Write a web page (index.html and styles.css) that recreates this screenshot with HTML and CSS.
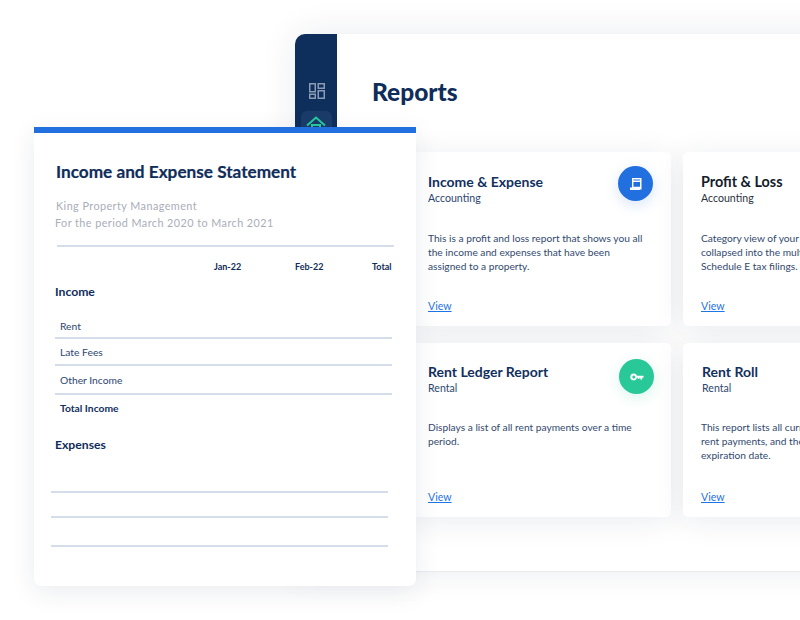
FILE: index.html
```html
<!DOCTYPE html>
<html lang="en">
<head>
<meta charset="utf-8">
<title>Reports</title>
<link rel="stylesheet" href="styles.css">
</head>
<body>
<div class="stage">
  <section class="app">
    <nav class="rail">
      <svg class="rail-icon" viewBox="0 0 16 16" width="16" height="16" fill="none" stroke="#8a9bb3" stroke-width="1.5">
        <rect x="0.75" y="0.75" width="5.5" height="8"/>
        <rect x="9.25" y="0.75" width="6" height="4.5"/>
        <rect x="0.75" y="11.25" width="5.5" height="4"/>
        <rect x="9.25" y="7.75" width="6" height="7.5"/>
      </svg>
      <div class="rail-active">
        <svg viewBox="0 0 20 16" width="20" height="16" fill="none" stroke="#25c9a0" stroke-width="2">
          <path d="M1 9.5 L10 1.5 L19 9.5"/>
          <path d="M6 9 H14 V16 H6 Z"/>
        </svg>
      </div>
    </nav>
    <main class="main">
      <h1 class="page-title">Reports</h1>
      <div class="cards">
        <article class="card">
          <div class="card-head">
            <div>
              <h2 class="card-title">Income &amp; Expense</h2>
              <p class="card-sub">Accounting</p>
            </div>
            <span class="badge badge-blue">
              <svg viewBox="0 0 14 14" width="14" height="14" fill="#fff">
                <path fill-rule="evenodd" d="M3 1 H12.5 V12.5 H11 V13 H1 V10.6 H3 Z M4.4 2.4 V3.6 H11 V2.4 Z M4.4 5 V9.8 H11 V5 Z"/>
              </svg>
            </span>
          </div>
          <p class="card-text">This is a profit and loss report that shows you all the income and expenses that have been assigned to a property.</p>
          <a class="card-link" href="#">View</a>
        </article>
        <article class="card">
          <div class="card-head">
            <div>
              <h2 class="card-title card-title-dark">Profit &amp; Loss</h2>
              <p class="card-sub card-sub-dark">Accounting</p>
            </div>
          </div>
          <p class="card-text">Category view of your income and expenses collapsed into the multiple categories used for Schedule E tax filings.</p>
          <a class="card-link" href="#">View</a>
        </article>
        <article class="card card-low">
          <div class="card-head">
            <div>
              <h2 class="card-title">Rent Ledger Report</h2>
              <p class="card-sub">Rental</p>
            </div>
            <span class="badge badge-green">
              <svg viewBox="0 0 14 14" width="14" height="14" fill="#fff">
                <path fill-rule="evenodd" d="M3.8 3.6 A3.4 3.4 0 0 1 7 5.7 H13.5 V7.8 H12.2 V9.6 H10.3 V7.8 H9.4 V9 H7.8 V7.8 H7 A3.4 3.4 0 1 1 3.8 3.6 Z M3.8 5.5 A1.5 1.5 0 1 0 3.8 8.5 A1.5 1.5 0 1 0 3.8 5.5 Z"/>
              </svg>
            </span>
          </div>
          <p class="card-text">Displays a list of all rent payments over a time period.</p>
          <a class="card-link" href="#">View</a>
        </article>
        <article class="card card-low">
          <div class="card-head">
            <div class="card-head-nudge">
              <h2 class="card-title">Rent Roll</h2>
              <p class="card-sub">Rental</p>
            </div>
          </div>
          <p class="card-text">This report lists all current tenants with their rent payments, and the status of their lease expiration date.</p>
          <a class="card-link" href="#">View</a>
        </article>
      </div>
    </main>
  </section>

  <section class="doc">
    <h2 class="doc-title">Income and Expense Statement</h2>
    <p class="doc-meta">King Property Management</p>
    <p class="doc-meta doc-meta-second">For the period March 2020 to March 2021</p>
    <div class="doc-cols">
      <span class="col-jan">Jan-22</span>
      <span class="col-feb">Feb-22</span>
      <span class="col-total">Total</span>
    </div>
    <h3 class="doc-section">Income</h3>
    <ul class="doc-rows">
      <li class="doc-row doc-row-rent">Rent</li>
      <li class="doc-row doc-row-fees">Late Fees</li>
      <li class="doc-row doc-row-other">Other Income</li>
      <li class="doc-row doc-row-total">Total Income</li>
    </ul>
    <h3 class="doc-section doc-section-exp">Expenses</h3>
    <div class="blank-rows">
      <div class="blank blank-a"></div>
      <div class="blank blank-b"></div>
      <div class="blank blank-c"></div>
    </div>
  </section>
</div>
</body>
</html>
```
FILE: styles.css
```css
* { box-sizing: border-box; }
html, body { margin: 0; padding: 0; background: #fff; }
body { font-family: Lato, "Open Sans", sans-serif; color: #0f2a5a; }
h1, h2, h3, p, ul { margin: 0; padding: 0; }
ul { list-style: none; }

.stage { position: relative; width: 800px; height: 620px; overflow: hidden; }

.app {
  position: absolute; left: 295px; top: 34px; width: 600px; height: 537px;
  display: flex; background: #fff;
  border-top-left-radius: 12px;
  box-shadow: 0 0 36px rgba(20, 40, 80, .09), 0 1px 1px rgba(20, 40, 80, .05);
}
.rail {
  width: 42px; flex: none; background: #0e2f5c;
  border-top-left-radius: 10px;
  display: flex; flex-direction: column; align-items: center;
  padding-top: 49px; padding-left: 2px;
}
.rail-icon { display: block; }
.rail-active {
  margin: 12px 0 0 -2px; width: 31px; height: 60px; border-radius: 6px;
  background: #1b3c69;
  display: flex; justify-content: center; padding-top: 5px;
}
.main { flex: 1; padding: 41px 0 0 35px; }
.page-title { font-size: 24.5px; line-height: 33px; font-weight: 900; color: #0f2d5b; }

.cards {
  display: grid; grid-template-columns: 261px 261px; grid-auto-rows: 174px;
  row-gap: 17px; column-gap: 12px; margin: 44px 0 0 38px;
}
.card {
  background: #fff; border-radius: 5px; padding: 21px 18px 0;
  box-shadow: 0 4px 30px rgba(20, 40, 80, .09);
  display: flex; flex-direction: column; position: relative;
}
.card-low { padding-top: 20px; }
.card-head { display: flex; justify-content: space-between; height: 44px; }
.card-head-nudge { margin-left: 1px; }
.card-title { font-size: 14px; line-height: 18px; font-weight: 700; color: #12305e; white-space: nowrap; }
.card-title-dark { color: #141c2c; font-size: 14.4px; }
.card-sub { font-size: 10.6px; line-height: 15px; color: #2d4670; }
.card-sub-dark { color: #2b3240; }
.card-text { font-size: 10.2px; line-height: 14px; color: #33496f; margin-top: 14px; width: 215px; }
.card-low .card-text { margin-top: 13px; }
.card-link {
  position: absolute; left: 18px; top: 147px;
  font-size: 10.6px; line-height: 14px; color: #1f74e6; text-decoration: underline;
}
.badge {
  width: 35px; height: 35px; border-radius: 50%; flex: none;
  display: flex; align-items: center; justify-content: center;
  margin: -7px 0 0 0;
}
.badge-blue { background: #2270e0; box-shadow: 0 4px 14px rgba(34, 112, 224, .18); }
.badge-green { background: #29c899; box-shadow: 0 4px 14px rgba(41, 200, 153, .18); margin: -4px -1px 0 0; }

.doc {
  position: absolute; left: 34px; top: 127px; width: 382px; height: 459px;
  background: #fff; border-top: 6px solid #2270e0;
  border-radius: 0 0 7px 7px;
  box-shadow: 0 6px 26px rgba(20, 40, 80, .09);
  padding: 28px 22px 0 22px;
}
.doc-title { font-size: 17.2px; line-height: 22px; font-weight: 700; color: #0f2d5b; white-space: nowrap; -webkit-text-stroke: .2px #0f2d5b; }
.doc-meta { font-size: 10.8px; line-height: 17px; letter-spacing: .45px; color: #a9adb8; margin-top: 14px; }
.doc-meta-second { margin-top: 0; margin-left: -1px; padding-bottom: 14px; }
.doc-cols {
  border-top: 2px solid #d5dcea; margin: 0 0 0 1px;
  position: relative; height: 30px; font-size: 9px; font-weight: 700; color: #0f2d5b;
}
.col-jan, .col-feb, .col-total { position: absolute; top: 14px; line-height: 12px; }
.col-jan { left: 157px; }
.col-feb { left: 238px; }
.col-total { left: 315px; }
.doc-section { font-size: 12.2px; line-height: 16px; font-weight: 700; color: #0f2d5b; margin: 9px 0 0 -1px; }
.doc-section-exp { margin-top: 14px; }
.doc-rows { margin-top: 19px; margin-right: 2px; margin-left: -1px; }
.doc-row { font-size: 10.3px; line-height: 14px; color: #2d4670; padding-left: 5px; border-bottom: 2px solid #d5dcea; }
.doc-row-rent { height: 20px; }
.doc-row-fees { height: 27px; padding-top: 6px; }
.doc-row-other { height: 29px; padding-top: 7px; }
.doc-row-total { border-bottom: 0; font-weight: 700; color: #12305e; padding-top: 6px; height: 28px; }
.blank-rows { margin: 0 6px 0 -5px; }
.blank { border-bottom: 2px solid #d5dcea; }
.blank-a { height: 40px; }
.blank-b { height: 25px; }
.blank-c { height: 29px; }
```
